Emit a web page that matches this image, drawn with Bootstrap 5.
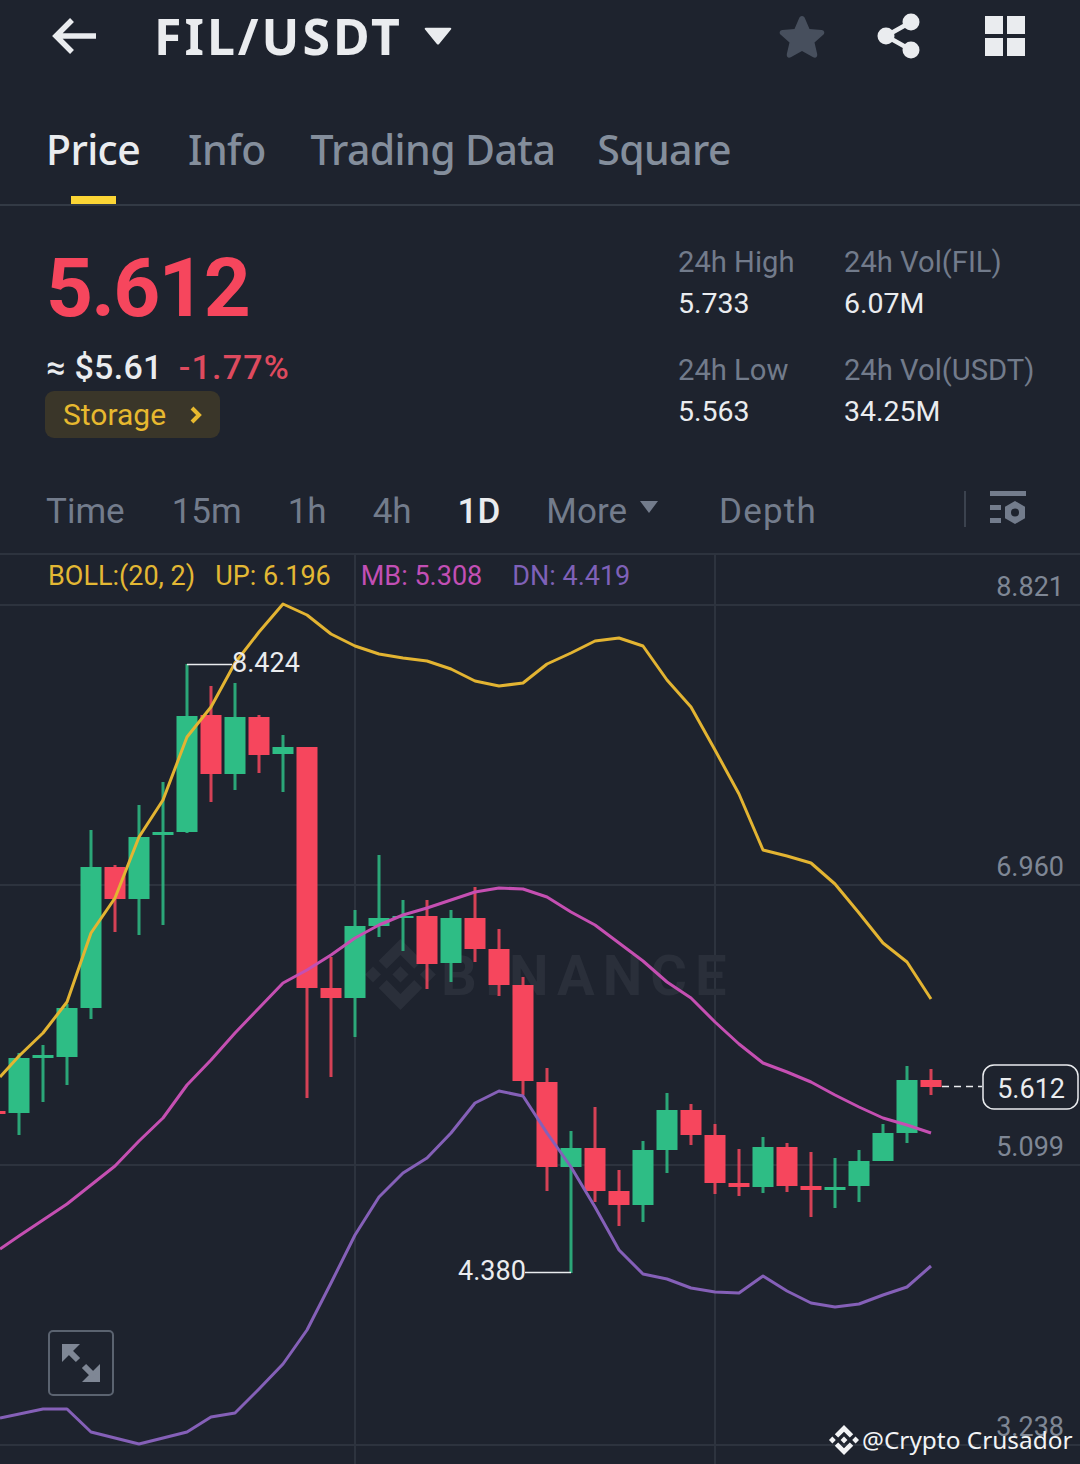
<!DOCTYPE html>
<html lang="en">
<head>
<meta charset="utf-8">
<title>FIL/USDT</title>
<link rel="stylesheet" href="https://cdn.jsdelivr.net/npm/bootstrap@5.3.0/dist/css/bootstrap.min.css">
<style>
html,body{background:#1e232e;height:1464px;overflow:hidden;}
body{font-family:Roboto,"Liberation Sans",sans-serif;color:#eaecef;}
.top-head{height:72px;padding-left:52px;}
.pair-name{font-size:50px;font-weight:700;line-height:1;margin-left:56px;letter-spacing:3px;font-family:"Noto Sans",Roboto,sans-serif;}
.tab-row{height:134px;padding-left:46px;gap:45px;border-bottom:2px solid #333a45;}
.tab-link{font-size:41px;line-height:1;color:#848e9c;padding:57px 0 0;position:relative;height:132px;font-family:"Noto Sans",Roboto,sans-serif;letter-spacing:-.6px;font-weight:500;}
.tab-on{color:#eaecef;margin-right:3px;}
.tab-end{margin-left:-3px;}
.tab-on::after{content:"";position:absolute;left:25px;width:45px;height:8px;bottom:0;background:#fcd535;}
.stats-band{height:264px;padding:0 0 0 46px;}
.big-price{font-size:82px;font-weight:700;color:#f6465d;line-height:1;margin:41px 0 0 0;letter-spacing:-1.8px;}
.fiat-row{font-size:34px;line-height:1;margin-top:21px;font-weight:500;letter-spacing:.3px;}
.fiat-change{color:#de4a5e;margin-left:16px;letter-spacing:1.2px;}
.tag-pill{width:175px;height:47px;background:#3a3629;color:#e7b92f;border-radius:9px;font-size:30px;padding-left:18px;margin-top:7px;gap:23px;margin-left:-1px;}
.stat-col-a{width:166px;}
.stat-col-b{width:236px;}
.stat-block{padding-top:38px;white-space:nowrap;margin-left:-2px;}
.stat-name{font-size:29.200px;line-height:36px;color:#727b8b;}
.stat-val{font-size:28.500px;line-height:36px;margin-top:6px;color:#eaecef;}
.stat-gap{margin-top:30px;}
.range-row{height:83px;padding:0 54px 0 46px;font-size:35px;color:#737c8c;}
.range-row span.itm{margin-right:46px;line-height:1;}
.range-row span.itm:first-child{margin-right:47px;}
.range-row span.itm-more{margin-right:60px;}
.range-row span.itm-last{margin-right:0;letter-spacing:1.200px;}
.itm-on{color:#eaecef;font-weight:500;}
.caret-more{margin:0 0 10px 12px;}
.range-sep{width:2px;height:36px;background:#3b424e;margin:-6px 24px 0 auto;}
.range-gear{margin-top:-6px;}
.chart-wrap{position:relative;height:911px;}
.chart-wrap svg.plot{display:block;width:1080px;height:911px;}
.legend-row{position:absolute;left:48px;top:5px;font-size:27px;line-height:36px;gap:20px;font-family:Roboto,sans-serif;}
.leg-y{color:#e3b834;}.leg-p{color:#c24fb5;}.leg-v{color:#7f61b8;}
.expand-box{position:absolute;left:48px;top:777px;width:66px;height:66px;border:2px solid #5b6370;border-radius:5px;background:#1e232e;}
.credit{position:absolute;left:829px;top:869px;font-size:24.400px;line-height:36px;color:#f2f3f5;font-family:"Noto Sans",sans-serif;gap:3px;white-space:nowrap;}
.plot text{font-family:Roboto,sans-serif;}
</style>
</head>
<body>
<header class="top-head d-flex align-items-center">
  <svg width="46" height="40" viewBox="0 0 46 40"><path d="M20 4 4 20l16 16M5 20h39" fill="none" stroke="#eaecef" stroke-width="5.5"/></svg>
  <div class="pair-name">FIL/USDT</div>
  <svg width="30" height="20" viewBox="0 0 32 22" style="margin-left:20px"><path d="M3 2h26a1 1 0 0 1 1 2L17 20a1.500 1.500 0 0 1-2 0L2 4a1 1 0 0 1 1-2z" fill="#eaecef"/></svg>
  <div class="d-flex align-items-center ms-auto" style="margin-right:55px;gap:0">
    <svg width="46" height="48" viewBox="0 0 46 48"><path d="M23 4c1.500 0 2.500 1 3 2.500l4.500 10.500 12 1c3 .3 3.500 3 2 4.500l-9 8 2.700 11.500c.5 3-1.700 4.500-4 3.200L23 39l-11.200 6.200c-2.300 1.300-4.500-.2-4-3.200l2.700-11.500-9-8c-1.500-1.500-1-4.200 2-4.500l12-1 4.500-10.500c.5-1.500 1.500-2.500 3-2.500z" fill="#474f5d"/></svg>
    <svg width="44" height="46" viewBox="0 0 44 46" style="margin-left:52px"><g fill="#eaecef"><circle cx="34" cy="9" r="8.500"/><circle cx="34" cy="37" r="8.500"/><circle cx="9" cy="23" r="8.500"/></g><path d="M34 9 9 23l25 14" fill="none" stroke="#eaecef" stroke-width="4.500"/></svg>
    <svg width="40" height="40" viewBox="0 0 40 40" style="margin-left:64px"><g fill="#eaecef"><rect width="18" height="18"/><rect x="22" width="18" height="18"/><rect y="22" width="18" height="18"/><rect x="22" y="22" width="18" height="18"/></g></svg>
  </div>
</header>

<nav class="tab-row d-flex">
  <div class="tab-link tab-on">Price</div>
  <div class="tab-link">Info</div>
  <div class="tab-link">Trading Data</div>
  <div class="tab-link tab-end">Square</div>
</nav>

<section class="stats-band d-flex justify-content-between">
  <div>
    <div class="big-price">5.612</div>
    <div class="fiat-row">≈ $5.61<span class="fiat-change">-1.77%</span></div>
    <div class="tag-pill d-flex align-items-center">Storage
      <svg width="13" height="18" viewBox="0 0 13 18"><path d="M3 2l7 7-7 7" fill="none" stroke="#e7b92f" stroke-width="4"/></svg>
    </div>
  </div>
  <div class="d-flex stat-block">
    <div class="stat-col-a">
      <div class="stat-name">24h High</div><div class="stat-val">5.733</div>
      <div class="stat-name stat-gap">24h Low</div><div class="stat-val">5.563</div>
    </div>
    <div class="stat-col-b">
      <div class="stat-name">24h Vol(FIL)</div><div class="stat-val">6.07M</div>
      <div class="stat-name stat-gap">24h Vol(USDT)</div><div class="stat-val">34.25M</div>
    </div>
  </div>
</section>

<div class="range-row d-flex align-items-center">
  <span class="itm">Time</span><span class="itm">15m</span><span class="itm">1h</span><span class="itm">4h</span><span class="itm itm-on">1D</span>
  <span class="itm itm-more d-flex align-items-center">More<svg class="caret-more" width="20" height="14" viewBox="0 0 20 14"><path d="M1 1h18L10 13z" fill="#737c8c"/></svg></span>
  <span class="itm itm-last">Depth</span>
  <div class="range-sep"></div>
  <svg class="range-gear" width="36" height="38" viewBox="0 0 36 38"><g fill="#737c8c"><rect width="36" height="5" y="1"/><rect y="15" width="11" height="5"/><rect y="28" width="11" height="5"/><path d="M25 11l10 5.700v11.600L25 34l-10-5.700V16.700z"/></g><circle cx="25" cy="22.500" r="4" fill="#1e232e"/></svg>
</div>

<main class="chart-wrap">
  <svg class="plot" id="plot" viewBox="0 553 1080 911" xmlns="http://www.w3.org/2000/svg"></svg>
  <div class="legend-row d-flex"><span class="leg-y">BOLL:(20, 2)</span><span class="leg-y">UP: 6.196</span><span class="leg-p" style="margin-left:10px">MB: 5.308</span><span class="leg-v" style="margin-left:10px">DN: 4.419</span></div>
  <div class="expand-box d-flex align-items-center justify-content-center">
    <svg width="40" height="40" viewBox="0 0 40 40"><g fill="#7f8795"><path d="M1 1h18L1 19z"/><path d="M39 39H21L39 21z"/></g><path d="M7 7l10 10M33 33 23 23" stroke="#7f8795" stroke-width="6" fill="none"/></svg>
  </div>
  <div class="credit d-flex align-items-center">
    <svg width="30" height="30" viewBox="0 0 126.610 126.610"><g fill="#f2f3f5"><path d="M38.730 53.200l24.590-24.580 24.600 24.600 14.300-14.310L63.320 0 24.430 38.900z"/><path d="M0 63.310l14.300-14.310 14.310 14.310-14.310 14.300z"/><path d="M38.730 73.410l24.590 24.590 24.600-24.600 14.310 14.290-38.900 38.910-38.910-38.880z"/><path d="M98 63.310l14.300-14.310 14.310 14.300-14.310 14.320z"/><path d="M77.830 63.300L63.320 48.780 48.810 63.280l14.510 14.500z"/></g></svg>
    <span>@Crypto Crusador</span>
  </div>
</main>

<script>
var G="#2ebd85",R="#f6465d";
// [centre x, colour, body top, body bottom, wick top, wick bottom]
var c=[[-5,R,1111,1114,1105,1135],[19,G,1058,1113,1053,1135],[43,G,1055,1058,1045,1102],[67,G,1008,1057,1004,1085],[91,G,867,1008,830,1019],[115,R,867,899,865,932],[139,G,837,899,805,935],[163,G,832,835,782,925],[187,G,716,832,664,833],[211,R,715,774,686,802],[235,G,717,774,683,790],[259,R,717,755,715,773],[283,G,747,754,735,792],[307,R,747,988,747,1098],[331,R,988,998,957,1077],[355,G,926,998,910,1037],[379,G,918,926,855,937],[403,G,916,918,900,951],[427,R,916,964,900,989],[451,G,918,963,910,982],[475,R,918,949,887,962],[499,R,949,985,929,996],[523,R,985,1081,977,1095],[547,R,1082,1167,1068,1191],[571,G,1148,1167,1131,1273],[595,R,1148,1191,1107,1202],[619,R,1191,1205,1170,1226],[643,G,1150,1205,1141,1222],[667,G,1110,1150,1093,1173],[691,R,1110,1135,1104,1145],[715,R,1135,1183,1124,1194],[739,R,1183,1187,1149,1196],[763,G,1147,1187,1137,1193],[787,R,1147,1186,1143,1192],[811,R,1186,1190,1152,1217],[835,G,1187,1190,1158,1208],[859,G,1161,1186,1150,1202],[883,G,1133,1161,1124,1161],[907,G,1080,1133,1066,1143],[931,R,1080,1087,1069,1095]];
var up="0,1077 19,1056 43,1033 67,1002 91,933 115,898 139,837 163,800 187,737 211,707 235,663 259,632 283,604 307,615 331,634 355,646 379,654 403,658 427,661 451,669 475,681 499,686 523,683 547,664 571,653 595,641 619,638 643,646 667,680 691,707 715,750 739,794 763,850 787,856 811,863 835,884 859,913 883,943 907,962 931,999";
var mb="0,1249 19,1236 43,1220 67,1204 91,1185 115,1166 139,1141 163,1118 187,1085 211,1060 235,1033 259,1008 283,983 307,970 331,955 355,938 379,925 403,915 427,908 451,900 475,892 499,888 523,889 547,897 571,912 595,925 619,943 643,961 667,982 691,998 715,1022 739,1044 763,1063 787,1072 811,1082 835,1095 859,1107 883,1118 907,1125 931,1133";
var dn="0,1418 43,1409 67,1409 91,1432 139,1444 187,1432 211,1417 235,1413 259,1389 283,1364 307,1330 331,1283 355,1235 379,1197 403,1173 427,1158 451,1133 475,1103 499,1091 523,1096 547,1133 571,1167 595,1207 619,1250 643,1274 667,1279 691,1288 715,1292 739,1293 763,1276 787,1291 811,1303 835,1307 859,1304 883,1295 907,1287 931,1266";
var s='';
[553,604,884,1164,1444].forEach(function(y){s+='<rect x="0" y="'+y+'" width="1080" height="2" fill="#2d333e"/>';});
[355,715].forEach(function(x){s+='<rect x="'+(x-1)+'" y="553" width="2" height="911" fill="#2d333e"/>';});
// watermark
s+='<g fill="#2a2f3a"><g transform="translate(365 939) scale(.56)"><path d="M38.730 53.200l24.590-24.580 24.600 24.600 14.300-14.310L63.320 0 24.430 38.900z"/><path d="M0 63.310l14.300-14.310 14.310 14.310-14.310 14.300z"/><path d="M38.730 73.410l24.590 24.590 24.600-24.600 14.310 14.290-38.900 38.910-38.910-38.880z"/><path d="M98 63.310l14.300-14.310 14.310 14.300-14.310 14.320z"/><path d="M77.830 63.300L63.320 48.780 48.810 63.280l14.510 14.500z"/></g>';
s+='<text x="441" y="995" font-size="56" font-weight="700" letter-spacing="8">BINANCE</text></g>';
c.forEach(function(k){
  var x=k[0],col=k[1];
  s+='<rect x="'+(x-1.5)+'" y="'+k[4]+'" width="3" height="'+(k[5]-k[4])+'" fill="'+col+'" opacity=".85"/>';
  s+='<rect x="'+(x-10.5)+'" y="'+k[2]+'" width="21" height="'+(k[3]-k[2])+'" fill="'+col+'"/>';
});
s+='<polyline points="'+up+'" fill="none" stroke="#e3b432" stroke-width="3" stroke-linejoin="round"/>';
s+='<polyline points="'+mb+'" fill="none" stroke="#c54fb2" stroke-width="3" stroke-linejoin="round"/>';
s+='<polyline points="'+dn+'" fill="none" stroke="#8560b8" stroke-width="3" stroke-linejoin="round"/>';
// high / low markers
s+='<path d="M187 664.500h45M525 1272.500h46" stroke="#eaecef" stroke-width="1.500" fill="none"/>';
s+='<text x="232" y="672" font-size="27" fill="#eaecef">8.424</text>';
s+='<text x="458" y="1280" font-size="27" fill="#eaecef">4.380</text>';
// axis
[[8.821,596],[6.960,876],[5.099,1156],[3.238,1436]].forEach(function(a){s+='<text x="1064" y="'+a[1]+'" text-anchor="end" font-size="27" fill="#7f8795">'+a[0].toFixed(3)+'</text>';});
s+='<path d="M942 1086.500h40" stroke="#eaecef" stroke-width="1.500" stroke-dasharray="7 5" fill="none"/>';
s+='<rect x="983" y="1065" width="95" height="44" rx="11" fill="#1e232e" stroke="#eaecef" stroke-width="1.500"/>';
s+='<text x="1065" y="1098" text-anchor="end" font-size="27" fill="#eaecef">5.612</text>';
document.getElementById('plot').innerHTML=s;
</script>
<script src="https://cdn.jsdelivr.net/npm/bootstrap@5.3.0/dist/js/bootstrap.bundle.min.js"></script>
</body>
</html>
